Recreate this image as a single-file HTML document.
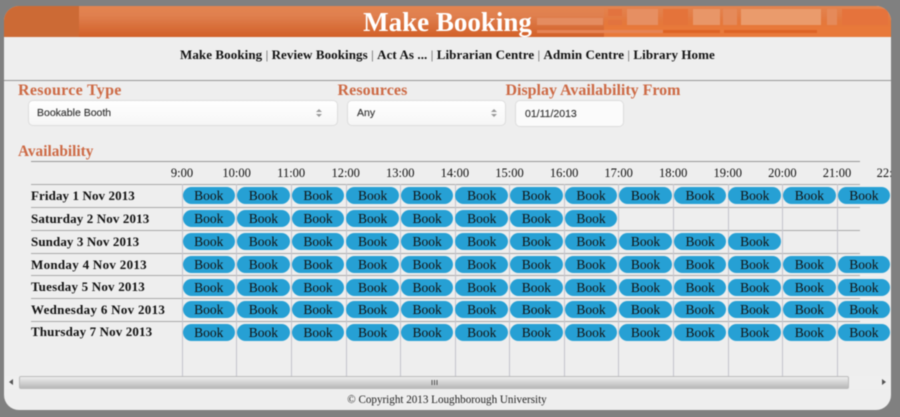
<!DOCTYPE html>
<html><head><meta charset="utf-8"><title>Make Booking</title>
<style>
html,body{margin:0;padding:0;width:900px;height:417px;overflow:hidden;background:#808080}
body{font-family:"Liberation Serif",serif;color:#111;position:relative}
#wrap{position:absolute;left:0;top:0;width:900px;height:417px;filter:blur(.45px)}
#panel{position:absolute;left:4px;top:6px;width:887px;height:404px;background:#eee;border-radius:15px;overflow:hidden}
#hd{position:absolute;left:0;top:0;width:887px;height:31px;background:linear-gradient(#e3844f,#e0804f 30%,#d26028)}
.d{position:absolute}
h1{position:absolute;left:0;top:0;width:887px;margin:0;text-align:center;color:#fff;font-size:27px;line-height:32px;font-weight:bold}
#nav{position:absolute;left:176px;top:41px;font-size:13px;line-height:16px;white-space:nowrap;color:#555;letter-spacing:.08px}
#nav b{color:#111}
.hr{position:absolute;height:1px;background:#999}
.lab{position:absolute;color:#cd6a45;font-weight:bold;font-size:16px;line-height:18px;white-space:nowrap}
.sel{position:absolute;top:94px;height:24px;background:linear-gradient(#fff,#f6f6f6);border:1px solid #ddd;border-radius:5px;font:10.5px/25px "Liberation Sans",sans-serif;color:#333;padding-left:8px;-webkit-text-stroke:.15px #333}
.sel i{position:absolute;right:15px;top:8px;width:0;height:0;border:3px solid transparent;border-bottom:3px solid #999;border-top:0}
.sel u{position:absolute;right:15px;top:13px;width:0;height:0;border:3px solid transparent;border-top:3px solid #999;border-bottom:0}
.t{position:absolute;top:158.500px;width:50px;text-align:center;font-size:12.5px;line-height:16px}
.v{position:absolute;top:178px;width:1px;height:192px;background:#c4c4cc}
.r{position:absolute;left:178.5px;display:flex;gap:2px;width:707.5px;overflow:hidden}
.r span{flex:0 0 52.6px;height:17px;background:#26a0d4;border-radius:9px;text-align:center;font-size:13.5px;line-height:17px;color:#111}
.day{position:absolute;left:27px;font-size:13px;line-height:16px;font-weight:bold;white-space:nowrap;letter-spacing:.1px}
.h{position:absolute;left:27px;width:829px;height:1px;background:#aaa}
#sb{position:absolute;left:1px;top:370px;width:885px;height:13px;background:#efefef}
#th{position:absolute;left:14px;top:0;width:830px;height:13px;background:linear-gradient(#eee,#d8d8d8 40%,#b8b8b8);border:1px solid #bbb;border-radius:2px;box-sizing:border-box}
#foot{position:absolute;left:0;top:386.500px;width:887px;text-align:center;font-size:11.1px;line-height:14px;color:#222;padding-right:1px;box-sizing:border-box}
</style></head><body>
<div id="wrap"><div id="panel">
<div id="hd">
<div class="d" style="left:600px;top:0;width:287px;height:31px;background:linear-gradient(rgba(232,125,60,0),#e8793a 70%)"></div>
<div class="d" style="left:0;top:0;width:75px;height:31px;background:#cc6a35"></div>
<div class="d" style="left:533px;top:12px;width:66px;height:7px;background:#e48c60"></div>
<div class="d" style="left:533px;top:24px;width:170px;height:3px;background:#e58456"></div>
<div class="d" style="left:604px;top:3px;width:14px;height:7px;background:#e2733f"></div>
<div class="d" style="left:604px;top:14px;width:14px;height:5px;background:#e2733f"></div>
<div class="d" style="left:623px;top:3px;width:31px;height:16px;background:#e68f62"></div>
<div class="d" style="left:659px;top:3px;width:25px;height:16px;background:#e4733a"></div>
<div class="d" style="left:659px;top:24px;width:57px;height:3px;background:#dd6425"></div>
<div class="d" style="left:689px;top:3px;width:27px;height:16px;background:#e89668"></div>
<div class="d" style="left:720px;top:24px;width:93px;height:3px;background:#dd6425"></div>
<div class="d" style="left:719px;top:3px;width:14px;height:16px;background:#e58a5a"></div>
<div class="d" style="left:737px;top:3px;width:80px;height:16px;background:#ea9b6c"></div>
<div class="d" style="left:823px;top:3px;width:10px;height:16px;background:#e58a5a"></div>
<div class="d" style="left:838px;top:3px;width:46px;height:16px;background:#e5733c"></div>
<h1>Make Booking</h1>
</div>
<div id="nav"><b>Make Booking</b> | <b>Review Bookings</b> | <b>Act As ...</b> | <b>Librarian Centre</b> | <b>Admin Centre</b> | <b>Library Home</b></div>
<div class="hr" style="left:0;top:74px;width:887px"></div>
<div class="lab" style="left:14px;top:76px;letter-spacing:.28px">Resource Type</div>
<div class="lab" style="left:333.500px;top:76px;letter-spacing:.1px">Resources</div>
<div class="lab" style="left:501.500px;top:76px;font-size:16px;letter-spacing:-.02px">Display Availability From</div>
<div class="sel" style="left:24px;width:300px">Bookable Booth<i></i><u></u></div>
<div class="sel" style="left:343px;width:148px;padding-left:9px">Any<i style="right:8px"></i><u style="right:8px"></u></div>
<div class="sel" style="left:511px;height:25px;width:98px;line-height:26px;background:#fbfbfb;padding-left:9px">01/11/2013</div>
<div class="lab" style="left:14px;top:137px;font-size:15.300px">Availability</div>
<div class="h" style="top:155px;background:#999"></div>
<div class="t" style="left:153px">9:00</div><div class="t" style="left:207.6px">10:00</div><div class="t" style="left:262.2px">11:00</div><div class="t" style="left:316.7px">12:00</div><div class="t" style="left:371.3px">13:00</div><div class="t" style="left:425.9px">14:00</div><div class="t" style="left:480.5px">15:00</div><div class="t" style="left:535.1px">16:00</div><div class="t" style="left:589.6px">17:00</div><div class="t" style="left:644.2px">18:00</div><div class="t" style="left:698.8px">19:00</div><div class="t" style="left:753.4px">20:00</div><div class="t" style="left:808px">21:00</div>
<div class="t" style="left:862.6px;width:24.4px;text-align:left;overflow:hidden;white-space:nowrap;padding-left:10px;box-sizing:border-box">22:00</div>
<div class="h" style="top:178px"></div><div class="h" style="top:201px"></div><div class="h" style="top:224px"></div><div class="h" style="top:246.6px"></div><div class="h" style="top:269.4px"></div><div class="h" style="top:292px"></div><div class="h" style="top:315px"></div>
<div class="v" style="left:178px"></div><div class="v" style="left:232px"></div><div class="v" style="left:287px"></div><div class="v" style="left:342px"></div><div class="v" style="left:396px"></div><div class="v" style="left:451px"></div><div class="v" style="left:505px"></div><div class="v" style="left:560px"></div><div class="v" style="left:614px"></div><div class="v" style="left:669px"></div><div class="v" style="left:724px"></div><div class="v" style="left:778px"></div><div class="v" style="left:833px"></div>
<div class="day" style="top:182px">Friday 1 Nov 2013</div>
<div class="day" style="top:205px;letter-spacing:.13px">Saturday 2 Nov 2013</div>
<div class="day" style="top:228px">Sunday 3 Nov 2013</div>
<div class="day" style="top:251px;letter-spacing:.3px">Monday 4 Nov 2013</div>
<div class="day" style="top:273px;letter-spacing:.2px">Tuesday 5 Nov 2013</div>
<div class="day" style="top:296px;letter-spacing:.3px">Wednesday 6 Nov 2013</div>
<div class="day" style="top:318px;letter-spacing:.13px">Thursday 7 Nov 2013</div>
<div class="r" style="top:181px"><span>Book</span><span>Book</span><span>Book</span><span>Book</span><span>Book</span><span>Book</span><span>Book</span><span>Book</span><span>Book</span><span>Book</span><span>Book</span><span>Book</span><span>Book</span></div>
<div class="r" style="top:204px"><span>Book</span><span>Book</span><span>Book</span><span>Book</span><span>Book</span><span>Book</span><span>Book</span><span>Book</span></div>
<div class="r" style="top:227px"><span>Book</span><span>Book</span><span>Book</span><span>Book</span><span>Book</span><span>Book</span><span>Book</span><span>Book</span><span>Book</span><span>Book</span><span>Book</span></div>
<div class="r" style="top:250px"><span>Book</span><span>Book</span><span>Book</span><span>Book</span><span>Book</span><span>Book</span><span>Book</span><span>Book</span><span>Book</span><span>Book</span><span>Book</span><span>Book</span><span>Book</span></div>
<div class="r" style="top:272.6px"><span>Book</span><span>Book</span><span>Book</span><span>Book</span><span>Book</span><span>Book</span><span>Book</span><span>Book</span><span>Book</span><span>Book</span><span>Book</span><span>Book</span><span>Book</span></div>
<div class="r" style="top:295px"><span>Book</span><span>Book</span><span>Book</span><span>Book</span><span>Book</span><span>Book</span><span>Book</span><span>Book</span><span>Book</span><span>Book</span><span>Book</span><span>Book</span><span>Book</span></div>
<div class="r" style="top:318px"><span>Book</span><span>Book</span><span>Book</span><span>Book</span><span>Book</span><span>Book</span><span>Book</span><span>Book</span><span>Book</span><span>Book</span><span>Book</span><span>Book</span><span>Book</span></div>
<div id="sb"><div id="th"><svg width="8" height="6" style="position:absolute;left:411px;top:3px"><path d="M1 0v5M3.500 0v5M6 0v5" stroke="#555" fill="none"/></svg></div>
<svg width="6" height="7" style="position:absolute;left:4px;top:3px"><path d="M4 0v6L0 3z" fill="#555"/></svg>
<svg width="6" height="7" style="position:absolute;left:876px;top:3px"><path d="M1 0v6l4-3z" fill="#555"/></svg></div>
<div id="foot">© Copyright 2013 Loughborough University</div>
</div></div>
</body></html>
